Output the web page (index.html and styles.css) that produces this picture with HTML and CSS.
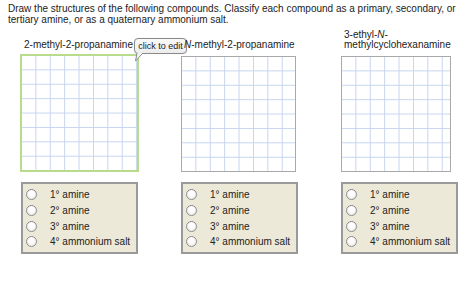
FILE: index.html
```html
<!DOCTYPE html>
<html>
<head>
<meta charset="utf-8">
<link rel="stylesheet" href="styles.css">
</head>
<body>
<div class="page">
  <p class="intro">Draw the structures of the following compounds. Classify each compound as a primary, secondary, or tertiary amine, or as a quaternary ammonium salt.</p>
  <div class="cols">
    <div class="col">
      <div class="label">2-methyl-2-propanamine</div>
      <div class="canvas active"></div>
      <div class="choices">
        <div class="opt"><span class="radio"></span>1° amine</div>
        <div class="opt"><span class="radio"></span>2° amine</div>
        <div class="opt"><span class="radio"></span>3° amine</div>
        <div class="opt"><span class="radio"></span>4° ammonium salt</div>
      </div>
      <div class="tip">click to edit
        <svg class="tail" width="10" height="9" viewBox="0 0 10 9"><path d="M2 0 L0.5 8 L8 0" fill="#f2f2f2" stroke="#8a8a8a" stroke-width="1"/><path d="M2.6 -0.5 L7 -0.5" stroke="#f2f2f2" stroke-width="2"/></svg>
      </div>
    </div>
    <div class="col">
      <div class="label"><i>N</i>-methyl-2-propanamine</div>
      <div class="canvas"></div>
      <div class="choices">
        <div class="opt"><span class="radio"></span>1° amine</div>
        <div class="opt"><span class="radio"></span>2° amine</div>
        <div class="opt"><span class="radio"></span>3° amine</div>
        <div class="opt"><span class="radio"></span>4° ammonium salt</div>
      </div>
    </div>
    <div class="col">
      <div class="label narrow">3-ethyl-<i>N</i>-<br>methylcyclohexanamine</div>
      <div class="canvas small"></div>
      <div class="choices">
        <div class="opt"><span class="radio"></span>1° amine</div>
        <div class="opt"><span class="radio"></span>2° amine</div>
        <div class="opt"><span class="radio"></span>3° amine</div>
        <div class="opt"><span class="radio"></span>4° ammonium salt</div>
      </div>
    </div>
  </div>
</div>
</body>
</html>
```
FILE: styles.css
```css
html, body {
  margin: 0;
  padding: 0;
  background: #ffffff;
}
body {
  font-family: "Liberation Sans", Arial, sans-serif;
  color: #222;
}
.page {
  padding: 3px 0 0 8px;
}
.intro {
  margin: 0;
  font-size: 10px;
  line-height: 11px;
  width: 460px;
}
.cols {
  display: grid;
  grid-template-columns: 160px 160px 120px;
  margin-left: 13px;
  margin-top: 5px;
}
.col {
  position: relative;
  display: flex;
  flex-direction: column;
}
.label {
  font-size: 10px;
  line-height: 10px;
  height: 20px;
  display: flex;
  align-items: flex-end;
  padding-left: 3px;
}
.label.narrow {
  display: block;
}
.canvas {
  margin-top: 6px;
  width: 113px;
  height: 114px;
  border: 1px solid #a9a9a9;
  background-color: #ffffff;
  background-image:
    linear-gradient(to right, #c6d4ee 1px, transparent 1px),
    linear-gradient(to bottom, #c6d4ee 1px, transparent 1px);
  background-size: 14.4px 14.4px;
  background-position: -1px -1px;
}
.canvas.active {
  margin-top: 4px;
  width: 115px;
  height: 114px;
  border: 2px solid #b8dc8c;
  margin-left: -1px;
}
.canvas.small {
  width: 108px;
}
.choices {
  margin-top: 10px;
  border: 2px solid #9a9a9a;
  background: #ece9d9;
  box-sizing: border-box;
  width: 117px;
  height: 72px;
  padding-top: 3px;
}
.opt {
  display: flex;
  align-items: center;
  height: 15.7px;
  font-size: 10px;
  color: #222;
}
.radio {
  width: 9px;
  height: 9px;
  border: 1.5px solid #8c8c8c;
  border-radius: 50%;
  background: radial-gradient(circle at 50% 40%, #ffffff 30%, #e4e4e4 100%);
  margin-left: 3px;
  margin-right: 13px;
  flex: none;
}
.tip {
  position: absolute;
  left: 113px;
  top: 8px;
  width: 51px;
  height: 14px;
  border: 1px solid #8a8a8a;
  border-radius: 4px;
  background: linear-gradient(#fafafa, #ececec);
  font-size: 9px;
  line-height: 14px;
  text-align: center;
  color: #222;
  box-shadow: 0 0 1px rgba(0,0,0,0.15);
}
.tail {
  position: absolute;
  left: 0px;
  top: 14px;
}
```
